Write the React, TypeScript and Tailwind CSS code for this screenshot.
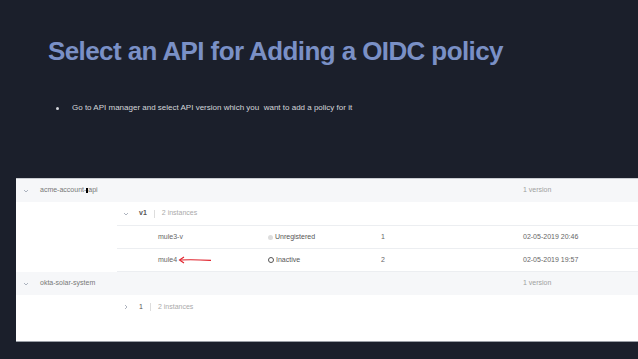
import React from "react";

const font = { fontFamily: '"Liberation Sans", Arial, sans-serif' };

function Chevron({ dir = "down" }: { dir?: "down" | "right" }) {
  return (
    <svg width="6" height="6" viewBox="0 0 6 6" className="text-gray-400">
      {dir === "down" ? (
        <polyline points="1,2 3,4 5,2" fill="none" stroke="currentColor" strokeWidth="0.8" />
      ) : (
        <polyline points="2,1 4,3 2,5" fill="none" stroke="currentColor" strokeWidth="0.8" />
      )}
    </svg>
  );
}

function ApiRow({ name, cursor }: { name: string; cursor?: boolean }) {
  return (
    <div className="flex h-[23px] items-center bg-[#f6f7f9] pl-[7px] text-[7px] text-[#777]">
      <div className="w-[17px]">
        <Chevron />
      </div>
      <div className="flex w-[483px] items-center">
        {cursor ? (
          <>
            acme-account-
            <span className="inline-block h-[5px] w-[2px] bg-black" />
            api
          </>
        ) : (
          name
        )}
      </div>
      <div className="text-[#a0a0a0]">1 version</div>
    </div>
  );
}

function VersionRow({ open, label }: { open: boolean; label: string }) {
  return (
    <div className="ml-[101px] flex h-[24px] items-center border-b border-[#eceef1] pl-[6px] text-[7px]">
      <div className="w-[16px]">
        <Chevron dir={open ? "down" : "right"} />
      </div>
      <span className="font-bold text-[#555]">{label}</span>
      <span className="mx-[7px] h-[8px] w-px bg-[#ddd]" />
      <span className="text-[#aaa]">2 instances</span>
    </div>
  );
}

function InstanceRow({
  name,
  status,
  count,
  date,
  arrow,
}: {
  name: string;
  status: "unregistered" | "inactive";
  count: string;
  date: string;
  arrow?: boolean;
}) {
  return (
    <div className="ml-[101px] flex h-[23px] items-center border-b border-[#eceef1] pl-[41px] text-[7px] text-[#666]">
      <div className="flex w-[110px] items-center">
        {name}
        {arrow && (
          <svg width="34" height="8" viewBox="0 0 34 8" className="ml-[1px]">
            <path d="M2 4 Q 14 3.2 33 4.4" fill="none" stroke="#e0202a" strokeWidth="1.1" />
            <path d="M6 1 L1.5 4 L6 7" fill="none" stroke="#e0202a" strokeWidth="1.1" />
          </svg>
        )}
      </div>
      <div className="flex w-[113px] items-center gap-[2px]">
        {status === "unregistered" ? (
          <span className="inline-block h-[5px] w-[5px] rounded-full bg-[#ddd]" />
        ) : (
          <span className="inline-block h-[6px] w-[6px] rounded-full border border-[#555]" />
        )}
        <span className="text-[#555]">{status === "unregistered" ? "Unregistered" : "Inactive"}</span>
      </div>
      <div className="w-[142px]">{count}</div>
      <div>{date}</div>
    </div>
  );
}

export default function App() {
  return (
    <div className="h-[359px] w-[638px] overflow-hidden bg-[#1b1f2b]" style={font}>
      <h1 className="pl-[48px] pt-[36px] text-[26px] font-bold leading-[30px] tracking-[-0.6px] text-[#7a90c6]">
        Select an API for Adding a OIDC policy
      </h1>
      <ul className="mt-[36px] pl-[56px] text-[8px] text-[#d4d6da]">
        <li className="flex items-center">
          <span className="mr-[13px] inline-block h-[3px] w-[3px] rounded-full bg-[#d4d6da]" />
          Go to API manager and select API version which you&nbsp; want to add a policy for it
        </li>
      </ul>
      <div className="ml-[16px] mt-[64px] h-[163px] border-t border-[#c9ccd1] bg-white shadow-[0_1px_0_#9a9ea6]">
        <ApiRow name="acme-account-api" cursor />
        <VersionRow open label="v1" />
        <InstanceRow name="mule3-v" status="unregistered" count="1" date="02-05-2019 20:46" />
        <InstanceRow name="mule4" status="inactive" count="2" date="02-05-2019 19:57" arrow />
        <ApiRow name="okta-solar-system" />
        <div className="ml-[101px] flex h-[24px] items-center pl-[6px] text-[7px]">
          <div className="w-[16px]">
            <Chevron dir="right" />
          </div>
          <span className="text-[#555]">1</span>
          <span className="mx-[7px] h-[8px] w-px bg-[#ddd]" />
          <span className="text-[#aaa]">2 instances</span>
        </div>
      </div>
    </div>
  );
}
